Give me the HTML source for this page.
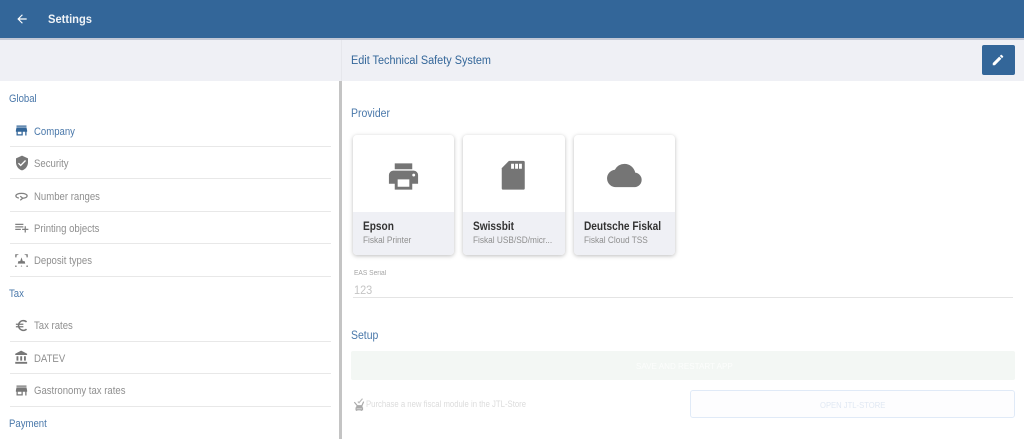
<!DOCTYPE html>
<html>
<head>
<meta charset="utf-8">
<style>
html,body{margin:0;padding:0;background:#fff}
body{width:1024px;height:439px;overflow:hidden;position:relative;font-family:"Liberation Sans",sans-serif}
#w{position:absolute;left:0;top:0;width:1024px;height:439px;filter:blur(.35px)}
.a{position:absolute;white-space:nowrap;line-height:14px;transform-origin:0 50%}
.h{color:#4a78aa;font-size:11px;transform:scaleX(.87)}
.i{color:#8f8f8f;font-size:11px;left:33.500px;transform:scaleX(.87)}
.p{color:#4a78aa;font-size:11.500px;transform:scaleX(.91)}
.l{position:absolute;left:10px;width:321px;height:1px;background:#e8e8e8}
svg{position:absolute}
.card{position:absolute;top:135px;height:120px;background:#fff;border-radius:4px;box-shadow:0 1px 4px rgba(0,0,0,.26);overflow:hidden}
.card .b{position:absolute;left:0;right:0;top:77px;bottom:0;background:#eff0f5}
.card .t{position:absolute;left:10px;top:85px;font-size:11.500px;font-weight:bold;color:#333;line-height:14px;white-space:nowrap;transform-origin:0 50%;transform:scaleX(.88)}
.card .s{position:absolute;left:10px;top:99px;font-size:9px;color:#8f8f8f;line-height:12px;white-space:nowrap;transform-origin:0 50%;transform:scaleX(.92)}
</style>
</head>
<body>
<div id="w">
<div style="position:absolute;left:0;top:0;width:1024px;height:38px;background:#336699"></div>
<div style="position:absolute;left:0;top:38px;width:1024px;height:2px;background:#c3c8d6"></div>
<div style="position:absolute;left:0;top:40px;width:1024px;height:41px;background:#eff0f5"></div>
<div style="position:absolute;left:341px;top:40px;width:1px;height:41px;background:#e6e7ec"></div>
<div style="position:absolute;left:339px;top:81px;width:3px;height:358px;background:#c4c4c4"></div>

<svg style="left:15px;top:12px" width="14" height="14" viewBox="0 0 24 24"><path d="M20 11H7.8l5.6-5.6L12 4l-8 8 8 8 1.4-1.4L7.8 13H20z" fill="#fff"/></svg>
<div class="a" style="left:48px;top:13px;color:#fff;font-size:11.500px;font-weight:bold;opacity:.92;transform:scaleX(.97)">Settings</div>

<div class="a" style="left:351px;top:54px;color:#336699;font-size:11.500px;transform:scaleX(.945)">Edit Technical Safety System</div>
<div style="position:absolute;left:982px;top:45px;width:33px;height:30px;background:#336699;border-radius:2px"></div>
<svg style="left:991px;top:53px" width="14" height="14" viewBox="0 0 24 24"><path d="M3 17.250V21h3.750L17.800 9.940l-3.750-3.750zM20.700 7.040a1 1 0 0 0 0-1.410l-2.340-2.340a1 1 0 0 0-1.410 0l-1.830 1.830 3.750 3.750z" fill="#fff"/></svg>

<div class="a h" style="left:9px;top:92px">Global</div>

<svg style="left:14px;top:123px" width="15" height="15" viewBox="0 0 24 24"><path d="M20 4H4v2h16zm1 10v-2l-1-5H4l-1 5v2h1v6h10v-6h4v6h2v-6zm-9 4H6v-4h6z" fill="#336699"/></svg>
<div class="a i" style="top:125px;color:#4a78aa">Company</div>
<div class="l" style="top:146px"></div>

<svg style="left:14px;top:155px" width="16" height="16" viewBox="0 0 24 24"><path d="M12 1 3 5v6c0 5.550 3.840 10.740 9 12 5.160-1.260 9-6.450 9-12V5zm-2 16-4-4 1.410-1.410L10 14.170l6.590-6.590L18 9z" fill="#777"/></svg>
<div class="a i" style="top:157px">Security</div>
<div class="l" style="top:178px"></div>

<svg style="left:14px;top:188.500px" width="15" height="15" viewBox="0 0 24 24"><path d="M3 11c0-2.500 4-4 9-4s9 1.500 9 4-3 3.500-7 3.800M10 11.500l4 3.300-4 3.200M8 14.500c-2.500-.4-5-1.500-5-3.500" fill="none" stroke="#808080" stroke-width="2"/></svg>
<div class="a i" style="top:190px">Number ranges</div>
<div class="l" style="top:211px"></div>

<svg style="left:14px;top:220px" width="15" height="15" viewBox="0 0 24 24"><path d="M2 6h13v2H2zm0 4h13v2H2zm0 4h9v2H2zm15 0v-4h2v4h4v2h-4v4h-2v-4h-4v-2z" fill="#808080"/></svg>
<div class="a i" style="top:222px">Printing objects</div>
<div class="l" style="top:243px"></div>

<svg style="left:14px;top:253px" width="15" height="15" viewBox="0 0 24 24"><path d="M2 2h6L4 4v3H2zm20 0h-6l4 2v3h2zM12 7l2 6h3l1 4H6l1-4h3z" fill="#777"/><circle cx="3" cy="21" r="1.300" fill="#777"/><circle cx="21" cy="21" r="1.300" fill="#777"/><circle cx="12" cy="21" r="1" fill="#999"/></svg>
<div class="a i" style="top:254px">Deposit types</div>
<div class="l" style="top:276px;height:1px"></div>

<div class="a h" style="left:9px;top:287px">Tax</div>

<svg style="left:14px;top:317.500px" width="15" height="15" viewBox="0 0 24 24"><path d="M15 18.500A6.500 6.500 0 0 1 9.200 15H15v-2H8.600a7 7 0 0 1 0-2H15V9H9.200A6.500 6.500 0 0 1 15 5.500c1.600 0 3.100.6 4.200 1.600L21 5.300A9 9 0 0 0 6.500 9H3v2h3.100a9 9 0 0 0 0 2H3v2h3.500A9 9 0 0 0 21 18.700l-1.800-1.800c-1.100 1-2.600 1.600-4.200 1.600z" fill="#777"/></svg>
<div class="a i" style="top:319px">Tax rates</div>
<div class="l" style="top:341px"></div>

<svg style="left:14px;top:350px" width="15" height="15" viewBox="0 0 24 24"><path d="M4 10v7h3v-7zm6 0v7h3v-7zM2 22h19v-3H2zm14-12v7h3v-7zM11.500 1 2 6v2h19V6z" fill="#777"/></svg>
<div class="a i" style="top:352px">DATEV</div>
<div class="l" style="top:373px"></div>

<svg style="left:14px;top:382.500px" width="15" height="15" viewBox="0 0 24 24"><path d="M20 4H4v2h16zm1 10v-2l-1-5H4l-1 5v2h1v6h10v-6h4v6h2v-6zm-9 4H6v-4h6z" fill="#777"/></svg>
<div class="a i" style="top:384px">Gastronomy tax rates</div>
<div class="l" style="top:406px"></div>

<div class="a h" style="left:9px;top:417px">Payment</div>

<div class="a p" style="left:351px;top:107px">Provider</div>

<div class="card" style="left:353px;width:101px"><div class="b"></div><div class="t">Epson</div><div class="s">Fiskal Printer</div></div>
<div class="card" style="left:463px;width:102px"><div class="b"></div><div class="t">Swissbit</div><div class="s">Fiskal USB/SD/micr...</div></div>
<div class="card" style="left:574px;width:101px"><div class="b"></div><div class="t">Deutsche Fiskal</div><div class="s">Fiskal Cloud TSS</div></div>

<svg style="left:386px;top:158.500px" width="35" height="35" viewBox="0 0 24 24"><path d="M19 8H5a3 3 0 0 0-3 3v6h4v4h12v-4h4v-6a3 3 0 0 0-3-3zm-3 11H8v-5h8zm3-7a1 1 0 1 1 0-2 1 1 0 0 1 0 2zM18 3H6v4h12z" fill="#757575"/></svg>
<svg style="left:496px;top:158px" width="34.500" height="34.500" viewBox="0 0 24 24"><path d="M19 2H9L4 7v14a1 1 0 0 0 1 1h14a1 1 0 0 0 1-1V3a1 1 0 0 0-1-1z" fill="#757575"/><path d="M10.500 4h2v3.500h-2zM13.300 4h2v3.500h-2zM16 4h2v3.500h-2z" fill="#fff"/></svg>
<svg style="left:607px;top:158px" width="35" height="35" viewBox="0 0 24 24"><path d="M19.350 10.040A7.490 7.490 0 0 0 12 4a7.500 7.500 0 0 0-6.650 4.040A6 6 0 0 0 6 20h13a5 5 0 0 0 .35-9.960z" fill="#757575"/></svg>

<div class="a" style="left:354px;top:268px;font-size:7px;line-height:12px;color:#a5a5a5;transform:scaleX(.95)">EAS Serial</div>
<div class="a" style="left:354px;top:284px;font-size:11.500px;color:#c4c4c4;transform:scaleX(.95)">123</div>
<div style="position:absolute;left:353px;top:297px;width:660px;height:1px;background:#e4e4e4"></div>

<div class="a p" style="left:351px;top:328.500px">Setup</div>
<div style="position:absolute;left:351px;top:351px;width:664px;height:29px;background:#f3f7f4;border-radius:2px"></div>
<div class="a" style="left:636px;top:359px;font-size:8.500px;color:#fcfdfc;transform:scaleX(.95)">SAVE AND RESTART APP</div>

<svg style="left:352px;top:397px" width="14" height="15" viewBox="0 0 24 24"><path d="M4 8l5 6h8l3-7M7 16h11M8 20v3M16 20v3M7 18h11v3H7z" fill="none" stroke="#aaa" stroke-width="2"/><path d="M10 7l2 2 6-7" fill="none" stroke="#bbb" stroke-width="2"/></svg>
<div class="a" style="left:366px;top:397px;font-size:9px;color:#dcdcdc;transform:scaleX(.86)">Purchase a new fiscal module in the JTL-Store</div>
<div style="position:absolute;left:690px;top:390px;width:323px;height:26px;border:1px solid #e0eaf7;border-radius:3px;background:#fdfdfe"></div>
<div class="a" style="left:820px;top:398px;font-size:8.500px;color:#e0e8f3;transform:scaleX(.9)">OPEN JTL-STORE</div>
</div>
</body>
</html>
